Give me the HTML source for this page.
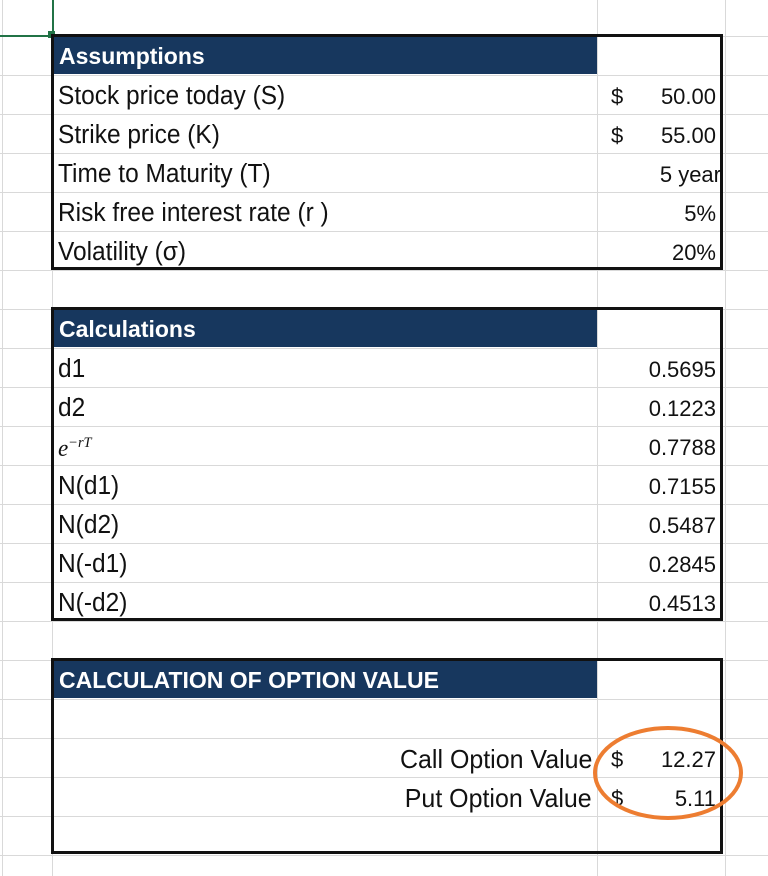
<!DOCTYPE html><html><head><meta charset="utf-8"><style>
body{margin:0;width:768px;height:876px;background:#fff;position:relative;overflow:hidden;font-family:"Liberation Sans",sans-serif;font-size:22px;color:#111}
.h{position:absolute;left:0;width:768px;height:1px;background:#d9d9d9}
.v{position:absolute;top:0;height:876px;width:1px;background:#d9d9d9}
.box{position:absolute;left:51px;width:672px;border:3px solid #111;box-sizing:border-box}
.hd{position:absolute;left:54px;width:543px;height:37px;background:#17375e;color:#fff;font-weight:bold;font-size:23px;line-height:39px;padding-left:5px;box-sizing:border-box;white-space:nowrap}
.l{position:absolute;left:58px;line-height:39px;height:39px;font-size:25.5px;transform:scaleX(0.96);transform-origin:left;white-space:nowrap}
.r{position:absolute;right:52px;line-height:39px;height:39px;text-align:right}
.d{position:absolute;left:611px;line-height:39px}
.rl{position:absolute;right:176px;line-height:39px;text-align:right;font-size:26px;transform:scaleX(0.96);transform-origin:right;white-space:nowrap}
</style></head><body>
<div class="v" style="left:2px"></div><div class="v" style="left:52px"></div><div class="v" style="left:597px"></div><div class="v" style="left:725px"></div>
<div class="h" style="top:36px"></div><div class="h" style="top:75px"></div><div class="h" style="top:114px"></div><div class="h" style="top:153px"></div><div class="h" style="top:192px"></div><div class="h" style="top:231px"></div><div class="h" style="top:270px"></div><div class="h" style="top:309px"></div><div class="h" style="top:348px"></div><div class="h" style="top:387px"></div><div class="h" style="top:426px"></div><div class="h" style="top:465px"></div><div class="h" style="top:504px"></div><div class="h" style="top:543px"></div><div class="h" style="top:582px"></div><div class="h" style="top:621px"></div><div class="h" style="top:660px"></div><div class="h" style="top:699px"></div><div class="h" style="top:738px"></div><div class="h" style="top:777px"></div><div class="h" style="top:816px"></div><div class="h" style="top:855px"></div>
<div style="position:absolute;left:0;top:0;width:52px;height:35px;border-right:2px solid #217346;border-bottom:2px solid #217346"></div>
<div style="position:absolute;left:48px;top:31px;width:7px;height:7px;background:#217346"></div>

<div class="box" style="top:34px;height:236px"></div>
<div class="hd" style="top:37px">Assumptions</div>
<div class="l" style="top:77px">Stock price today (S)</div><div class="d" style="top:77px">$</div><div class="r" style="top:77px">50.00</div>
<div class="l" style="top:116px">Strike price (K)</div><div class="d" style="top:116px">$</div><div class="r" style="top:116px">55.00</div>
<div class="l" style="top:155px">Time to Maturity (T)</div><div class="r" style="top:155px;right:47px">5 year</div>
<div class="l" style="top:194px">Risk free interest rate (r )</div><div class="r" style="top:194px">5%</div>
<div class="l" style="top:233px">Volatility (σ)</div><div class="r" style="top:233px">20%</div>

<div class="box" style="top:307px;height:314px"></div>
<div class="hd" style="top:310px">Calculations</div>
<div class="l" style="top:350px">d1</div><div class="r" style="top:350px">0.5695</div>
<div class="l" style="top:389px">d2</div><div class="r" style="top:389px">0.1223</div>
<div class="l" style="top:424px;font-family:'Liberation Serif',serif;font-style:italic;font-size:24px">e<sup style="font-size:15px">−rT</sup></div><div class="r" style="top:428px">0.7788</div>
<div class="l" style="top:467px">N(d1)</div><div class="r" style="top:467px">0.7155</div>
<div class="l" style="top:506px">N(d2)</div><div class="r" style="top:506px">0.5487</div>
<div class="l" style="top:545px">N(-d1)</div><div class="r" style="top:545px">0.2845</div>
<div class="l" style="top:584px">N(-d2)</div><div class="r" style="top:584px">0.4513</div>

<div class="box" style="top:658px;height:196px"></div>
<div class="hd" style="top:661px">CALCULATION OF OPTION VALUE</div>
<div class="rl" style="top:740px">Call Option Value</div><div class="d" style="top:740px">$</div><div class="r" style="top:740px">12.27</div>
<div class="rl" style="top:779px">Put Option Value</div><div class="d" style="top:779px">$</div><div class="r" style="top:779px">5.11</div>
<svg style="position:absolute;left:0;top:0" width="768" height="876"><ellipse cx="668" cy="773" rx="73" ry="45" fill="none" stroke="#ed7d31" stroke-width="4"/></svg>
</body></html>
